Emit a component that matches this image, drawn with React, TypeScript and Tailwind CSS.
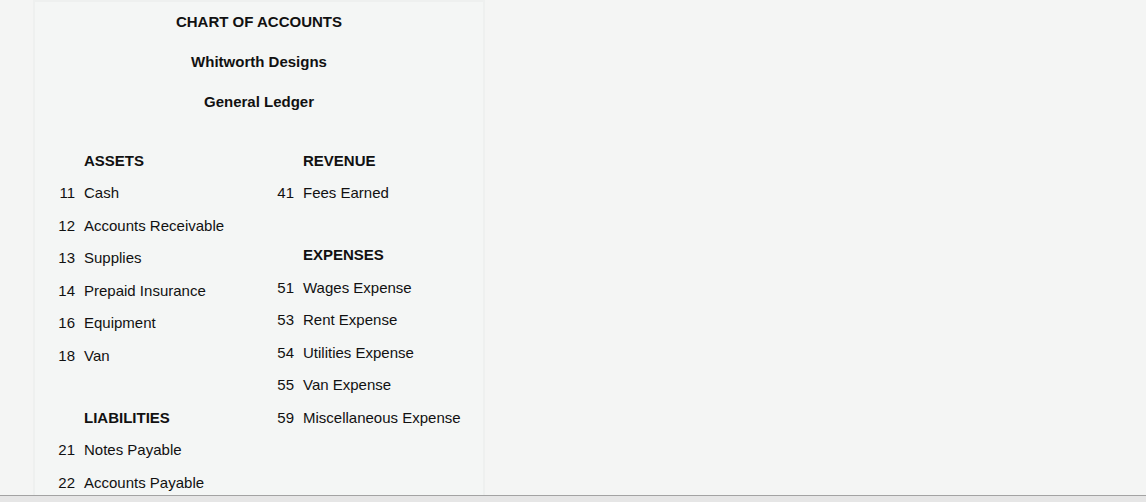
import React from "react";

const left: { header: string; items: [string, string][] }[] = [
  {
    header: "ASSETS",
    items: [
      ["11", "Cash"],
      ["12", "Accounts Receivable"],
      ["13", "Supplies"],
      ["14", "Prepaid Insurance"],
      ["16", "Equipment"],
      ["18", "Van"],
    ],
  },
  {
    header: "LIABILITIES",
    items: [
      ["21", "Notes Payable"],
      ["22", "Accounts Payable"],
    ],
  },
];

const right: { header: string; items: [string, string][] }[] = [
  { header: "REVENUE", items: [["41", "Fees Earned"]] },
  {
    header: "EXPENSES",
    items: [
      ["51", "Wages Expense"],
      ["53", "Rent Expense"],
      ["54", "Utilities Expense"],
      ["55", "Van Expense"],
      ["59", "Miscellaneous Expense"],
    ],
  },
];

function Column({
  sections,
  width,
}: {
  sections: { header: string; items: [string, string][] }[];
  width: string;
}) {
  return (
    <div className={`flex flex-col ${width}`}>
      {sections.map((s, i) => (
        <div key={s.header} className={i > 0 ? "mt-[29.5px]" : ""}>
          <div className="flex h-[32.5px] items-center">
            <span className="w-[34px] shrink-0" />
            <span className="font-bold">{s.header}</span>
          </div>
          {s.items.map(([n, name]) => (
            <div key={n} className="flex h-[32.5px] items-center">
              <span className="w-[25px] shrink-0 text-right">{n}</span>
              <span className="ml-[9px] whitespace-nowrap">{name}</span>
            </div>
          ))}
        </div>
      ))}
    </div>
  );
}

export default function App() {
  return (
    <div
      className="flex h-[502px] w-[1146px] flex-col overflow-hidden bg-[#f4f5f4] text-[15px] text-[#111111]"
      style={{ fontFamily: '"Liberation Sans", Arial, sans-serif' }}
    >
      <div className="h-[495px] overflow-hidden">
        <div className="ml-[33px] w-[452px] border-2 border-[#eef0ef] bg-[#f4f6f5] pb-4">
          <div className="flex flex-col items-center font-bold">
            <div className="flex h-[40px] items-center">CHART OF ACCOUNTS</div>
            <div className="flex h-[40px] items-center">Whitworth Designs</div>
            <div className="flex h-[40px] items-center">General Ledger</div>
          </div>
          <div className="mt-[22.5px] flex pl-[15px]">
            <Column sections={left} width="w-[219px]" />
            <Column sections={right} width="w-[200px]" />
          </div>
        </div>
      </div>
      <div className="h-[7px] border-t border-[#a3a3a3] bg-[#e6e6e6]" />
    </div>
  );
}
